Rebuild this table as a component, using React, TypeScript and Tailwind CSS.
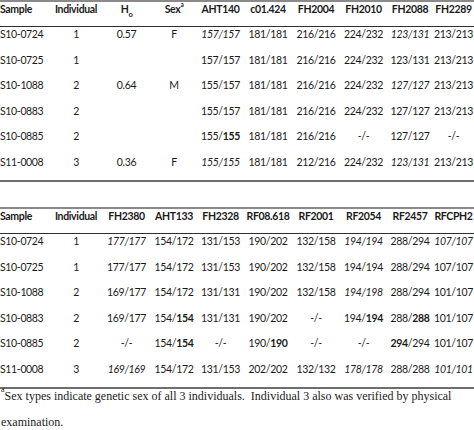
import React from 'react';

// column widths shared by both tables (px)
const cols = 'grid-cols-[50px_52px_49px_46px_47px_48px_48px_47px_46px_41px]';

const table1Head: React.ReactNode[] = [
  'Sample',
  'Individual',
  <span key="ho">
    H<sub className="text-[7.5px] align-[-2px]">o</sub>
  </span>,
  <span key="sex">
    Sex<sup className="text-[6.5px] align-[3px]">a</sup>
  </span>,
  'AHT140',
  'c01.424',
  'FH2004',
  'FH2010',
  'FH2088',
  'FH2289',
];

const table1Rows = [
  ['S10-0724', '1', '0.57', 'F', '*157/157*', '181/181', '216/216', '224/232', '*123/131*', '213/213'],
  ['S10-0725', '1', '', '', '157/157', '181/181', '216/216', '224/232', '123/131', '213/213'],
  ['S10-1088', '2', '0.64', 'M', '155/157', '181/181', '216/216', '224/232', '*127/127*', '213/213'],
  ['S10-0883', '2', '', '', '155/157', '181/181', '216/216', '224/232', '127/127', '213/213'],
  ['S10-0885', '2', '', '', '155/**155**', '181/181', '216/216', '-/-', '127/127', '-/-'],
  ['S11-0008', '3', '0.36', 'F', '*155/155*', '181/181', '212/216', '224/232', '*123/131*', '213/213'],
];

const table2Head = ['Sample', 'Individual', 'FH2380', 'AHT133', 'FH2328', 'RF08.618', 'RF2001', 'RF2054', 'RF2457', 'RFCPH2'];

const table2Rows = [
  ['S10-0724', '1', '*177/177*', '154/172', '131/153', '190/202', '132/158', '*194/194*', '288/294', '*107/107*'],
  ['S10-0725', '1', '177/177', '154/172', '131/153', '190/202', '132/158', '194/194', '288/294', '107/107'],
  ['S10-1088', '2', '169/177', '154/172', '131/131', '190/202', '132/158', '*194/198*', '288/294', '101/107'],
  ['S10-0883', '2', '169/177', '154/**154**', '131/131', '190/202', '-/-', '194/**194**', '288/**288**', '101/107'],
  ['S10-0885', '2', '-/-', '154/**154**', '-/-', '190/**190**', '-/-', '-/-', '**294**/294', '101/107'],
  ['S11-0008', '3', '*169/169*', '154/172', '131/153', '202/202', '132/132', '*178/178*', '288/288', '*101/101*'],
];

// "*x*" = italic cell, "**x**" = bold part
function CellText({ value }: { value: string }) {
  if (/^\*[^*].*\*$/.test(value)) {
    return <span className="italic">{value.slice(1, -1)}</span>;
  }
  const parts = value.split('**');
  return (
    <>
      {parts.map((p, i) =>
        i % 2 === 1 ? (
          <b key={i} className="font-bold">
            {p}
          </b>
        ) : (
          <span key={i}>{p}</span>
        )
      )}
    </>
  );
}

function Table({ head, rows }: { head: React.ReactNode[]; rows: string[][] }) {
  return (
    <div className="border-t-2 border-b-2 border-t-[#8a8a8a] border-b-[#6e6e6e]">
      <div className={`grid ${cols} h-[25px] border-b border-[#2e2e2e] font-bold`}>
        {head.map((h, i) => (
          <div key={i} className={`pt-[1px] leading-[12px] whitespace-nowrap ${i === 0 ? 'text-left' : 'text-center'}`}>
            {h}
          </div>
        ))}
      </div>
      {rows.map((r, ri) => (
        <div key={ri} className={`grid ${cols} h-[25.5px]`}>
          {r.map((v, i) => (
            <div key={i} className={`pt-[1px] leading-[12px] whitespace-nowrap ${i === 0 ? 'text-left' : 'text-center'}`}>
              <CellText value={v} />
            </div>
          ))}
        </div>
      ))}
    </div>
  );
}

export default function App() {
  return (
    <div className="w-[474px] h-[430px] overflow-hidden bg-white text-[#1a1a1a]">
      <div className="font-['Lato',sans-serif] text-[10.5px] tracking-[-0.35px]">
        <Table head={table1Head} rows={table1Rows} />
        <div className="mt-[25px]">
          <Table head={table2Head} rows={table2Rows} />
        </div>
      </div>
      <p className="-mt-[6px] pl-[1px] font-['Liberation_Serif',serif] text-[12px] leading-[26px] whitespace-nowrap">
        <sup className="text-[8px] align-[4px]">a</sup>Sex types indicate genetic sex of all 3 individuals.&nbsp; Individual 3 also was verified by physical
        <br />
        examination.
      </p>
    </div>
  );
}
